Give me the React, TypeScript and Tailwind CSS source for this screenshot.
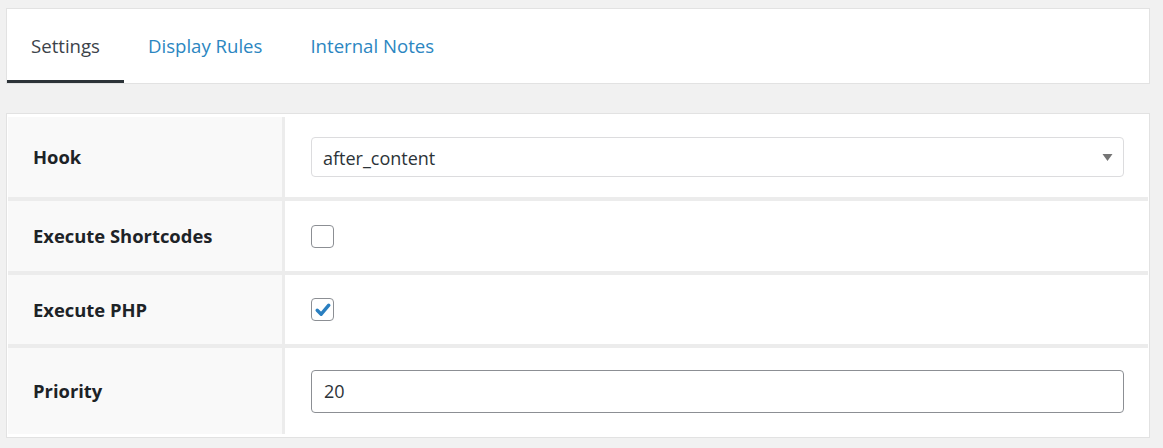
import React from 'react';

const tabs = [
  { name: 'Settings', active: true },
  { name: 'Display Rules', active: false },
  { name: 'Internal Notes', active: false },
];

function Checkbox({ checked }: { checked: boolean }) {
  return (
    <span className="flex h-[23px] w-[23px] items-center justify-center rounded-[4px] border-[1.5px] border-[#8c8f94] bg-white">
      {checked && (
        <svg viewBox="0 0 20 20" className="h-[20px] w-[20px]">
          <path d="M4.2 10.2 L8.2 14.2 L15.8 5.2" fill="none" stroke="#2a7fc0" strokeWidth="3.4" strokeLinecap="round" strokeLinejoin="round" />
        </svg>
      )}
    </span>
  );
}

function Row({ label, height, children }: { label: string; height: string; children: React.ReactNode }) {
  return (
    <div className={`grid grid-cols-[274px_1fr] gap-[3px] ${height}`}>
      <div className="flex items-center bg-[#f9f9f9] pl-[25px] text-[18.4px] font-bold text-[#1d2327]">{label}</div>
      <div className="flex items-center bg-white pl-[26px] pr-[24px]">{children}</div>
    </div>
  );
}

export default function App() {
  return (
    <div className="min-h-[448px] bg-[#f1f1f1] pl-[6px] pt-[8px]" style={{ fontFamily: '"Open Sans", "Noto Sans", sans-serif' }}>
      {/* Tabs */}
      <div className="flex h-[76px] w-[1144px] border border-[#e2e2e2] bg-white">
        {tabs.map((tab) => (
          <div
            key={tab.name}
            className={`flex items-center border-b-[3px] px-[24px] pt-[3px] text-[18.6px] ${
              tab.active ? 'border-[#2c3338] text-[#3c434a]' : 'border-transparent text-[#2b86c1]'
            }`}
          >
            {tab.name}
          </div>
        ))}
      </div>

      {/* Settings table */}
      <div className="mt-[29px] w-[1144px] border border-[#e2e2e2] bg-white px-[1px] py-[3px]">
        <div className="flex flex-col gap-[4px] bg-[#ececec]">
          <Row label="Hook" height="h-[80px]">
            <div className="flex h-[40px] w-full items-center justify-between rounded-[4px] border border-[#dcdcde] bg-white pl-[11px] pr-[10px] text-[18px] text-[#2c3338]">
              <span className="pt-[2px]">after_content</span>
              <svg viewBox="0 0 10 7" className="h-[7px] w-[11px]">
                <path d="M0 0 L10 0 L5 7 Z" fill="#757575" />
              </svg>
            </div>
          </Row>
          <Row label="Execute Shortcodes" height="h-[70px]">
            <Checkbox checked={false} />
          </Row>
          <Row label="Execute PHP" height="h-[69px]">
            <Checkbox checked={true} />
          </Row>
          <Row label="Priority" height="h-[86px]">
            <div className="flex h-[43px] w-full items-center rounded-[4px] border-[1.5px] border-[#8c8f94] bg-white pl-[12px] text-[18px] text-[#2c3338]">
              20
            </div>
          </Row>
        </div>
      </div>
    </div>
  );
}
